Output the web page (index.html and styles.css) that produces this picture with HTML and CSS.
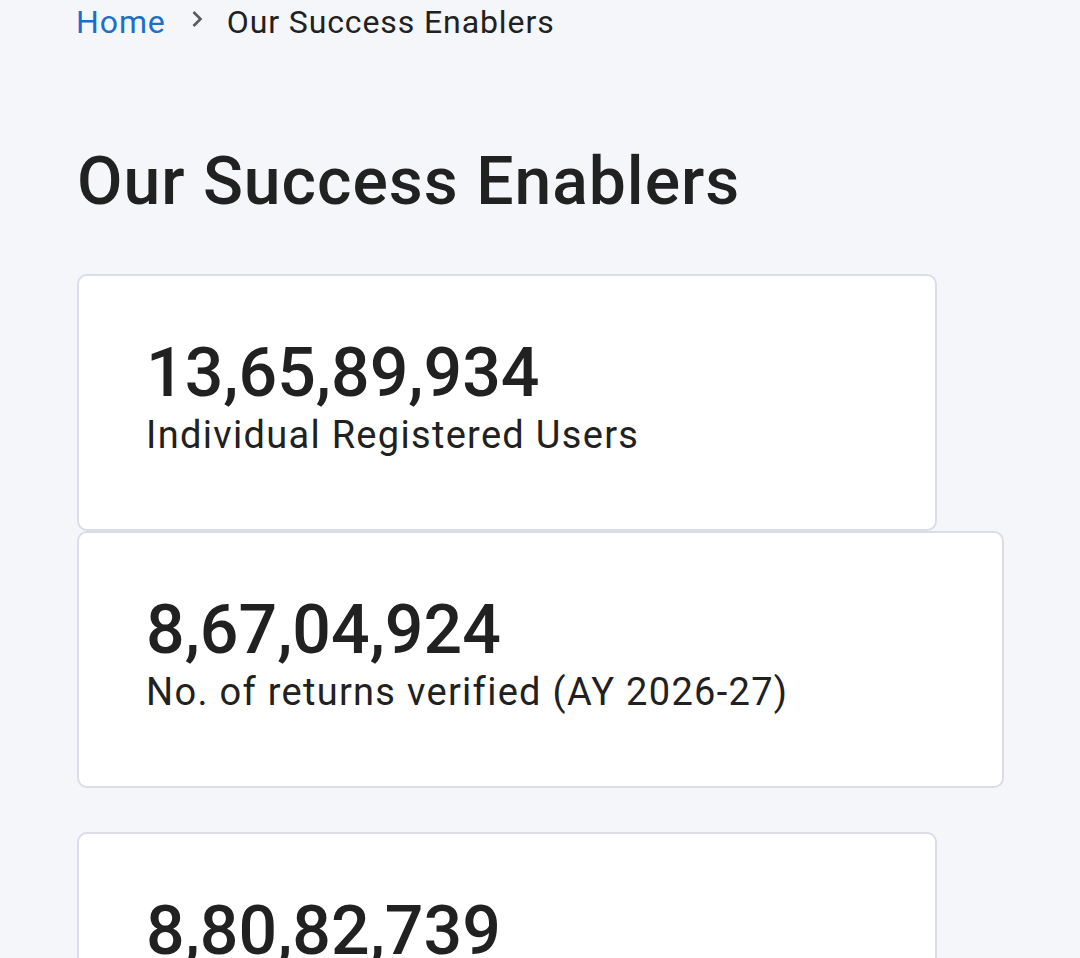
FILE: index.html
```html
<!DOCTYPE html>
<html lang="en">

<head>
    <meta charset="UTF-8">
    <meta name="viewport" content="width=device-width, initial-scale=1.0">
    <title>Our Success Enablers</title>
    <link rel="stylesheet" href="styles.css">
</head>

<body>

    <div class="container">
        <nav class="breadcrumb">
            <a href="#" class="crumb-link">Home</a>
            <svg class="crumb-sep" width="12" height="18" viewBox="0 0 12 18">
                <path d="M2.5 2l7 7-7 7" fill="none" stroke="#5a5a5a" stroke-width="2.6" />
            </svg>
            <span class="crumb-current">Our Success Enablers</span>
        </nav>

        <h1>Our Success Enablers</h1>

        <div class="stats">
            <div class="stat-card">
                <div class="stat-value">13,65,89,934</div>
                <div class="stat-label">Individual Registered Users</div>
            </div>

            <div class="stat-card wide">
                <div class="stat-value">8,67,04,924</div>
                <div class="stat-label">No. of returns verified (AY 2026-27)</div>
            </div>

            <!-- third card continues below the fold -->
            <div class="stat-card spaced">
                <div class="stat-value">8,80,82,739</div>
            </div>
        </div>
    </div>

</body>

</html>
```

FILE: styles.css
```css
body {
    font-family: Roboto, "Noto Sans", Arial, sans-serif;
    margin: 0;
    padding: 0;
    background-color: #f5f6fa;
    color: #212121;
    overflow: hidden;
}

.container {
    padding: 0 0 0 77px;
}

.breadcrumb {
    display: flex;
    align-items: center;
    height: 44px;
    margin-left: -1px;
    font-size: 32px;
    line-height: 44px;
    letter-spacing: 0.9px;
}

.crumb-link {
    color: #1a6fc9;
    text-decoration: none;
}

.crumb-sep {
    flex-shrink: 0;
    margin: -7px 24px 0 25px;
}

.crumb-current {
    color: #212121;
}

h1 {
    font-size: 66px;
    font-weight: 500;
    letter-spacing: 1px;
    line-height: 66px;
    margin: 105px 0 59px;
}

.stats {
    display: flex;
    flex-direction: column;
    align-items: flex-start;
}

.stat-card {
    box-sizing: border-box;
    width: 860px;
    height: 257px;
    padding: 63px 67px 0;
    background-color: #fff;
    border: 2px solid #dcdce9;
    border-radius: 10px;
}

.stat-card.wide {
    width: 927px;
}

.stat-card.spaced {
    margin-top: 44px;
}

.stat-value {
    font-size: 68px;
    font-weight: 500;
    line-height: 68px;
}

.stat-label {
    font-size: 38px;
    letter-spacing: 1.3px;
    line-height: 56px;
}
```
